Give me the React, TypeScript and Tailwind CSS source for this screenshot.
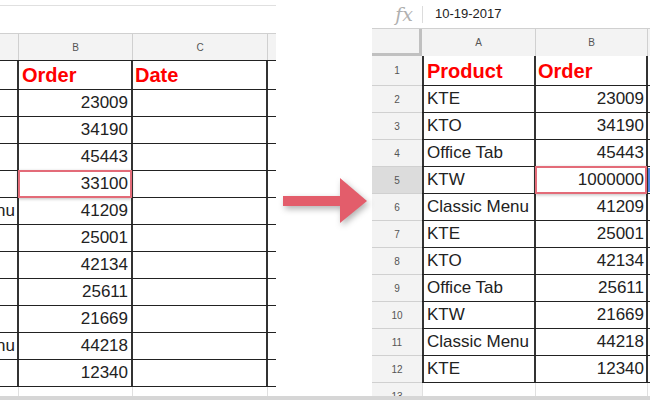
import React from "react";

const data: [string, string][] = [
  ["KTE", "23009"],
  ["KTO", "34190"],
  ["Office Tab", "45443"],
  ["KTW", "33100"],
  ["Classic Menu", "41209"],
  ["KTE", "25001"],
  ["KTO", "42134"],
  ["Office Tab", "25611"],
  ["KTW", "21669"],
  ["Classic Menu", "44218"],
  ["KTE", "12340"],
];

const font = "font-['Liberation_Sans',Arial,sans-serif]";

function Selection() {
  return (
    <div className="pointer-events-none absolute inset-[-1px] border-2 border-[#e36b78] shadow-[0_1px_3px_rgba(0,0,0,0.25)]" />
  );
}

function LeftSheet() {
  return (
    <div className={`flex w-[276px] flex-col ${font}`}>
      <div className="h-[33px] shrink-0">
        <div className="mt-[5px] h-px bg-[#e0e0e0]" />
      </div>
      <div className="flex h-[27px] shrink-0 border-t border-[#d0d0d0] bg-[#f3f3f3] text-[10px] text-[#555]">
        <div className="w-[19px] border-r border-[#d0d0d0]" />
        <div className="flex w-[114px] items-center justify-center border-r border-[#d0d0d0]">B</div>
        <div className="flex w-[135px] items-center justify-center border-r border-[#d0d0d0]">C</div>
        <div className="w-[8px]" />
      </div>
      <div className="flex h-[30px] shrink-0 border-y border-[#222]">
        <div className="w-[19px] border-r-2 border-[#333]" />
        <div className="flex w-[114px] items-center border-r-2 border-[#333] pl-[3px] text-[20px] font-bold text-[#ff0000]">Order</div>
        <div className="flex w-[135px] items-center border-r-2 border-[#333] pl-[2px] text-[20px] font-bold text-[#ff0000]">Date</div>
        <div className="w-[8px]" />
      </div>
      {data.map(([product, order], i) => (
        <div key={i} className="flex h-[27px] shrink-0 border-b border-[#222] text-[17px] text-[#222]">
          {/* column A is scrolled off to the left; only the tail of long names shows */}
          <div className="flex w-[19px] items-center justify-end overflow-hidden whitespace-nowrap border-r-2 border-[#333] pr-[2px]">
            {product === "Classic Menu" ? product : ""}
          </div>
          <div className="relative flex w-[114px] items-center justify-end border-r-2 border-[#333] pr-[3px]">
            {order}
            {i === 3 && <Selection />}
          </div>
          <div className="w-[135px] border-r-2 border-[#333]" />
          <div className="w-[8px]" />
        </div>
      ))}
      <div className="flex flex-1">
        <div className="w-[19px] border-r border-[#e0e0e0]" />
        <div className="w-[114px] border-r border-[#e0e0e0]" />
        <div className="w-[135px] border-r border-[#e0e0e0]" />
      </div>
    </div>
  );
}

function Arrow() {
  return (
    <div className="flex w-[96px] flex-col">
      <svg className="mt-[170px] drop-shadow-[2px_3px_3px_rgba(0,0,0,0.3)]" width="96" height="60" viewBox="0 0 96 60">
        <rect x="7" y="26" width="60" height="10" fill="#e35d6b" />
        <polygon points="64,8 91,31 64,53" fill="#e35d6b" />
      </svg>
    </div>
  );
}

function RightSheet() {
  return (
    <div className={`flex w-[278px] flex-col ${font}`}>
      <div className="flex h-[28px] shrink-0 items-center">
        <div className="flex w-[50px] justify-center pl-[14px] font-['DejaVu_Serif',serif] text-[19px] italic leading-none text-[#b0b0b0]">
          fx
        </div>
        <div className="h-[17px] w-px bg-[#dcdcdc]" />
        <div className="pl-[12px] text-[13px] text-[#222]">10-19-2017</div>
      </div>
      <div className="flex h-[28px] shrink-0 border-t border-[#d0d0d0] bg-[#f3f3f3] text-[10px] text-[#555]">
        <div className="w-[50px] border-b-[3px] border-r-[3px] border-[#c0c0c0]" />
        <div className="flex w-[114px] items-center justify-center border-r border-[#d0d0d0]">A</div>
        <div className="flex w-[112px] items-center justify-center border-r border-[#d0d0d0]">B</div>
        <div className="w-[2px]" />
      </div>
      <div className="flex h-[30px] shrink-0">
        <div className="flex w-[50px] items-center justify-center border-b border-[#d0d0d0] bg-[#f3f3f3] text-[10px] text-[#555]">1</div>
        <div className="flex flex-1 border-b border-[#222]">
          <div className="flex w-[114px] items-center border-x-2 border-[#333] pl-[3px] text-[20px] font-bold text-[#ff0000]">Product</div>
          <div className="flex w-[112px] items-center border-r-2 border-[#333] pl-[2px] text-[20px] font-bold text-[#ff0000]">Order</div>
        </div>
      </div>
      {data.map(([product, order], i) => (
        <div key={i} className="flex h-[27px] shrink-0">
          <div
            className={`flex w-[50px] items-center justify-center border-b border-[#d0d0d0] text-[10px] text-[#555] ${
              i === 3 ? "bg-[#dcdcdc]" : "bg-[#f3f3f3]"
            }`}
          >
            {i + 2}
          </div>
          <div className="flex flex-1 border-b border-[#222] text-[17px] text-[#222]">
            <div className="flex w-[114px] items-center whitespace-nowrap border-x-2 border-[#333] pl-[3px]">{product}</div>
            <div className="relative flex w-[112px] items-center justify-end border-r-2 border-[#333] pr-[2px]">
              {i === 3 ? "1000000" : order}
              {i === 3 && <Selection />}
            </div>
            {i === 3 && <div className="my-[1px] w-[2px] bg-[#4a86e8]" />}
          </div>
        </div>
      ))}
      <div className="flex flex-1 overflow-hidden">
        <div className="flex w-[50px] justify-center bg-[#f3f3f3] pt-[9px] text-[10px] leading-none text-[#555]">13</div>
        <div className="w-[114px] border-x border-[#e0e0e0]" />
        <div className="w-[112px] border-r border-[#e0e0e0]" />
      </div>
    </div>
  );
}

export default function App() {
  return (
    <div className="flex h-[400px] w-[650px] flex-col overflow-hidden bg-white">
      <div className="flex h-[396px]">
        <LeftSheet />
        <Arrow />
        <RightSheet />
      </div>
      <div className="h-[4px] bg-[#d6d6d6]" />
    </div>
  );
}
